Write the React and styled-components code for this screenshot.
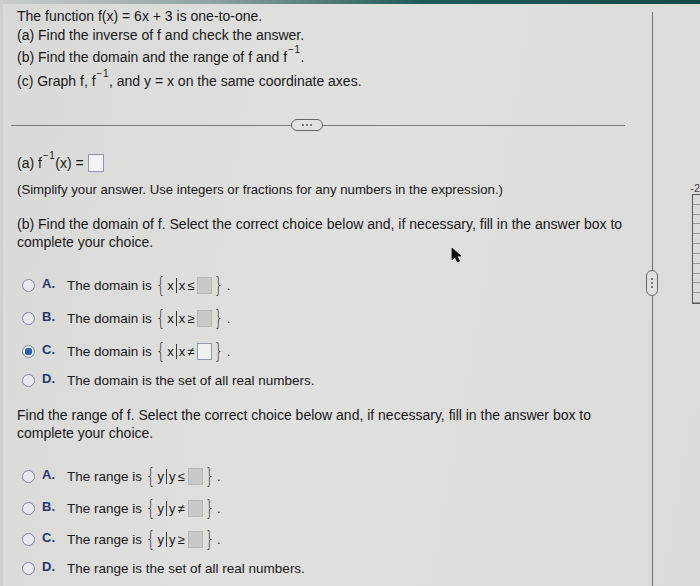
import React from "react";
import styled, { createGlobalStyle } from "styled-components";

const GlobalStyle = createGlobalStyle`
  html, body {
    margin: 0;
    padding: 0;
    background: #dcdcdb;
  }
  body {
    font-family: "Liberation Sans", Arial, sans-serif;
    color: #191919;
  }
`;

const DOMAIN_OPTIONS = [
  { letter: "A", text: "The domain is", v: "x", op: "≤", filled: true },
  { letter: "B", text: "The domain is", v: "x", op: "≥", filled: true },
  { letter: "C", text: "The domain is", v: "x", op: "≠", filled: false, checked: true },
  { letter: "D", text: "The domain is the set of all real numbers." }
];

const RANGE_OPTIONS = [
  { letter: "A", text: "The range is", v: "y", op: "≤", filled: true },
  { letter: "B", text: "The range is", v: "y", op: "≠", filled: true },
  { letter: "C", text: "The range is", v: "y", op: "≥", filled: true },
  { letter: "D", text: "The range is the set of all real numbers." }
];

// gap above each choice row
const DOMAIN_GAPS = [0, 14, 14, 10];
const RANGE_GAPS = [0, 13, 12, 10];

const Inverse = () => (
  <>
    f<Sup>−1</Sup>
  </>
);

const SetExpr = ({ v, op, filled }) => (
  <SetWrap>
    <Brace>{"{"}</Brace>
    {v}
    <Bar />
    {v}
    <Op>{op}</Op>
    <AnswerBox filled={filled} />
    <Brace>{"}"}</Brace>
    <Dot>.</Dot>
  </SetWrap>
);

const Choice = ({ option, top }) => (
  <ChoiceRow top={top}>
    <Radio checked={option.checked} />
    <Letter>{option.letter}.</Letter>
    <ChoiceText>
      {option.text}
      {option.op && (
        <>
          {" "}
          <SetExpr v={option.v} op={option.op} filled={option.filled} />
        </>
      )}
    </ChoiceText>
  </ChoiceRow>
);

const Cursor = () => (
  <CursorSvg width="12" height="16" viewBox="0 0 12 16">
    <path d="M1 1 L1 13 L4 10 L6.5 15 L8.5 14 L6 9 L10 9 Z" fill="#111" stroke="#111" strokeWidth="0.8" strokeLinejoin="round" />
  </CursorSvg>
);

export default function App() {
  return (
    <Page>
      <GlobalStyle />
      <TopBar />
      <Body>
        <Main>
          <Problem>
            <Line h={17}>The function f(x) = 6x + 3 is one-to-one.</Line>
            <Line h={20}>(a) Find the inverse of f and check the answer.</Line>
            <Line h={24}>
              (b) Find the domain and the range of f and <Inverse />.
            </Line>
            <Line h={24}>
              (c) Graph f, <Inverse />, and y = x on the same coordinate axes.
            </Line>
          </Problem>

          <Separator>
            <SepLine fixed={280} />
            <Pill>
              <PillDot />
              <PillDot />
              <PillDot />
            </Pill>
            <SepLine />
          </Separator>

          <PartA>
            <Line h={24}>
              (a) <Inverse />(x) = <EmptyBox />
            </Line>
            <Note>
              (Simplify your answer. Use integers or fractions for any numbers in the expression.)
            </Note>
          </PartA>

          <Prompt top={16}>
            <Line h={18}>
              (b) Find the domain of f. Select the correct choice below and, if necessary, fill in the answer box to
            </Line>
            <Line h={18}>complete your choice.</Line>
            <Cursor />
          </Prompt>

          <Choices>
            {DOMAIN_OPTIONS.map((o, i) => (
              <Choice key={o.letter} option={o} top={DOMAIN_GAPS[i]} />
            ))}
          </Choices>

          <Prompt top={16}>
            <Line h={18}>
              Find the range of f. Select the correct choice below and, if necessary, fill in the answer box to
            </Line>
            <Line h={18}>complete your choice.</Line>
          </Prompt>

          <Choices>
            {RANGE_OPTIONS.map((o, i) => (
              <Choice key={o.letter} option={o} top={RANGE_GAPS[i]} />
            ))}
          </Choices>
        </Main>

        <VDivider>
          <VLine fixed={258} />
          <VHandle>
            <PillDot />
            <PillDot />
            <PillDot />
          </VHandle>
          <VLine />
        </VDivider>

        <Side>
          <AxisLabel>-2</AxisLabel>
          <GraphFrag>
            {Array.from({ length: 11 }).map((_, i) => (
              <GridRow key={i} />
            ))}
          </GraphFrag>
        </Side>
      </Body>
    </Page>
  );
}

const Page = styled.div`
  width: 700px;
  height: 586px;
  overflow: hidden;
  position: relative;
  background: linear-gradient(100deg, #d9d9d8 0%, #e0e0df 45%, #dbdbda 100%);
  border-left: 3px solid #cfcfcb;
  box-sizing: border-box;
`;

const TopBar = styled.div`
  height: 4px;
  background: linear-gradient(90deg, #c9cccb 0%, #8fa3a0 30%, #1e5a56 60%, #154b47 100%);
`;

const Body = styled.div`
  display: flex;
  height: 582px;
`;

const Main = styled.div`
  width: 648px;
  padding: 4px 0 0 14px;
  box-sizing: border-box;
  font-size: 14px;
`;

const Problem = styled.div`
  display: flex;
  flex-direction: column;
`;

const Line = styled.div`
  height: ${({ h }) => h}px;
  line-height: ${({ h }) => h}px;
  white-space: nowrap;
  display: flex;
  align-items: flex-end;
  position: relative;
`;

const Note = styled.div`
  margin-top: 6px;
  height: 18px;
  line-height: 18px;
  font-size: 13.2px;
  white-space: nowrap;
`;

const Sup = styled.span`
  font-size: 10px;
  position: relative;
  top: -7px;
  margin-left: 1px;
  letter-spacing: 0.5px;
`;

const Separator = styled.div`
  display: flex;
  align-items: center;
  margin: 26px 20px 0 -6px;
  height: 12px;
`;

const SepLine = styled.div`
  ${({ fixed }) => (fixed ? `width: ${fixed}px;` : "flex: 1;")}
  height: 1px;
  background: #7a7a7a;
`;

const Pill = styled.div`
  width: 30px;
  height: 10px;
  border: 1px solid #666;
  border-radius: 6px;
  display: flex;
  align-items: center;
  justify-content: center;
  gap: 2px;
  background: #e2e2e1;
`;

const PillDot = styled.span`
  width: 2px;
  height: 2px;
  border-radius: 50%;
  background: #555;
`;

const PartA = styled.div`
  margin-top: 20px;
  display: flex;
  flex-direction: column;
`;

const EmptyBox = styled.span`
  display: inline-block;
  width: 14px;
  height: 16px;
  border: 1px solid #8c98b0;
  background: #f3f3f3;
  margin-left: 4px;
  margin-bottom: 3px;
`;

const Prompt = styled.div`
  margin-top: ${({ top }) => top}px;
  position: relative;
`;

const CursorSvg = styled.svg`
  position: absolute;
  left: 434px;
  top: 32px;
`;

const Choices = styled.div`
  margin-top: 25px;
  padding-left: 5px;
`;

const ChoiceRow = styled.div`
  display: flex;
  align-items: center;
  height: 19px;
  margin-top: ${({ top }) => top}px;
  font-size: 13.5px;
`;

const Radio = styled.span`
  width: 11px;
  height: 11px;
  border-radius: 50%;
  border: 1.5px solid #7d87a0;
  background: ${({ checked }) => (checked ? "radial-gradient(circle, #2d5fb8 0 3.5px, #e8ecf5 4px)" : "#e9eaee")};
  box-sizing: content-box;
  flex-shrink: 0;
`;

const Letter = styled.span`
  font-weight: bold;
  color: #26386e;
  font-size: 13px;
  width: 20px;
  margin-left: 7px;
  position: relative;
  top: -2px;
`;

const ChoiceText = styled.span`
  display: flex;
  align-items: center;
  white-space: nowrap;
  margin-left: 5px;
`;

const SetWrap = styled.span`
  display: inline-flex;
  align-items: center;
  margin-left: 2px;
  font-size: 13px;
`;

const Brace = styled.span`
  font-family: "DejaVu Sans", sans-serif;
  font-weight: 300;
  font-size: 21px;
  transform: scaleX(0.7);
  color: #333;
  line-height: 19px;
`;

const Bar = styled.span`
  width: 1px;
  height: 15px;
  background: #333;
  margin: 0 2px;
`;

const Op = styled.span`
  margin-left: 2px;
`;

const AnswerBox = styled.span`
  width: 15px;
  height: 17px;
  margin-left: 3px;
  box-sizing: border-box;
  border: 1px solid ${({ filled }) => (filled ? "#b9b9b9" : "#8c98b0")};
  background: ${({ filled }) => (filled ? "#c9c9c9" : "#f1f1f1")};
`;

const Dot = styled.span`
  margin-left: 1px;
`;

const VDivider = styled.div`
  width: 14px;
  display: flex;
  flex-direction: column;
  align-items: center;
  padding-top: 8px;
`;

const VLine = styled.div`
  width: 1px;
  ${({ fixed }) => (fixed ? `height: ${fixed}px;` : "flex: 1;")}
  background: #6e6e6e;
`;

const VHandle = styled.div`
  width: 10px;
  height: 24px;
  border: 1px solid #666;
  border-radius: 6px;
  display: flex;
  flex-direction: column;
  align-items: center;
  justify-content: center;
  gap: 2px;
  background: #e0e0df;
`;

const Side = styled.div`
  flex: 1;
  padding: 178px 0 0 33px;
  font-size: 11px;
  color: #444;
`;

const AxisLabel = styled.div`
  margin-left: -2px;
  height: 12px;
`;

const GraphFrag = styled.div`
  border: 1px solid #555;
  border-right: none;
  height: 108px;
  display: flex;
  flex-direction: column;
`;

const GridRow = styled.div`
  flex: 1;
  border-bottom: 1px solid #999;
`;
